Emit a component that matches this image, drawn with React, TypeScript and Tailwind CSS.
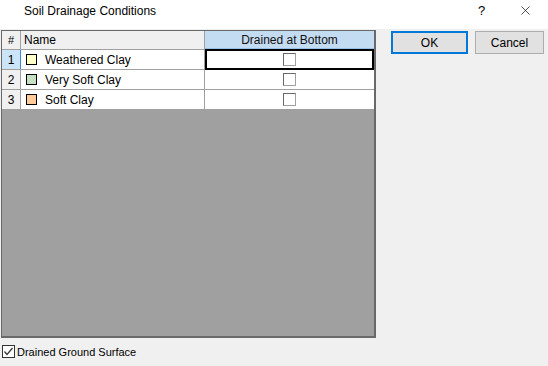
import { X } from "lucide-react";

const layers = [
  { id: 1, name: "Weathered Clay", color: "bg-[#ffffc8]" },
  { id: 2, name: "Very Soft Clay", color: "bg-[#c6e0c6]" },
  { id: 3, name: "Soft Clay", color: "bg-[#ffcc99]" },
];

function CellCheckbox() {
  return (
    <div className="w-[13px] h-[13px] bg-white border border-[#a0a0a0] border-t-[#696969] border-l-[#696969]" />
  );
}

function App() {
  return (
    <div
      className="w-[548px] h-[366px] bg-[#f0f0f0] flex flex-col text-[12px] text-black overflow-hidden"
      style={{ fontFamily: "'Segoe UI', 'Liberation Sans', Arial, sans-serif" }}
    >
      {/* title bar */}
      <div className="h-[29px] bg-white flex items-start shrink-0">
        <div className="pl-[24px] pt-[2px] flex-1">Soil Drainage Conditions</div>
        <div className="w-[44px] pt-[1px] pl-[3px] text-center text-[13px]">?</div>
        <div className="w-[46px] pt-[3px] flex justify-center">
          <X size={15} strokeWidth={1.1} />
        </div>
      </div>

      <div className="flex flex-1 pt-[1px]">
        {/* grid */}
        <div className="ml-[1px] w-[375px] h-[308px] border border-[#696969] border-r-2 border-b-2 bg-[#a0a0a0] flex flex-col">
          <div className="flex h-[19px] bg-[#f0f0f0] border-b border-[#a0a0a0]">
            <div className="w-[19px] border-r border-[#a0a0a0] text-center leading-[19px] text-[11px]">#</div>
            <div className="w-[184px] border-r border-[#a0a0a0] pl-[3px] leading-[18px]">Name</div>
            <div className="flex-1 bg-[#c4dcf2] border-b border-[#98c1e6] text-center leading-[18px] text-[#111]">
              Drained at Bottom
            </div>
          </div>
          {layers.map((l) => (
            <div key={l.id} className="flex h-[20px] bg-white border-b border-[#a0a0a0]">
              <div
                className={
                  l.id === 1
                    ? "w-[19px] bg-[#cce4f7] border-r border-[#3c8ad6] text-center leading-[21px]"
                    : "w-[19px] bg-[#f0f0f0] border-r border-[#a0a0a0] text-center leading-[21px]"
                }
              >
                {l.id}
              </div>
              <div className="w-[184px] border-r border-[#a0a0a0] flex items-center pl-[5px] gap-[8px]">
                <div className={`w-[11px] h-[11px] border border-black ${l.color}`} />
                <span className="leading-[18px]">{l.name}</span>
              </div>
              <div
                className={
                  l.id === 1
                    ? "flex-1 flex justify-center items-center border-2 border-black -mt-[1px] -mb-[1px] h-[21px]"
                    : "flex-1 flex justify-center items-center"
                }
              >
                <CellCheckbox />
              </div>
            </div>
          ))}
        </div>

        {/* buttons */}
        <div className="flex gap-[7px] ml-[15px] pt-[1px] items-start">
          <button className="w-[77px] h-[23px] bg-[#e1e1e1] border-2 border-[#0078d7]">OK</button>
          <button className="w-[69px] h-[23px] bg-[#e1e1e1] border border-[#adadad]">Cancel</button>
        </div>
      </div>

      {/* footer */}
      <div className="h-[28px] flex items-start pl-[2px] pt-[6px] gap-[2px] shrink-0 text-[11px]">
        <div className="mt-[1px] w-[13px] h-[13px] bg-white border border-[#333] flex items-center justify-center">
          <svg width="11" height="11" viewBox="0 0 11 11">
            <path d="M1.5 5.5 L4 8.5 L9.5 2" fill="none" stroke="#333" strokeWidth="1.2" />
          </svg>
        </div>
        <span className="leading-[16px]">Drained Ground Surface</span>
      </div>
    </div>
  );
}

export default App;
